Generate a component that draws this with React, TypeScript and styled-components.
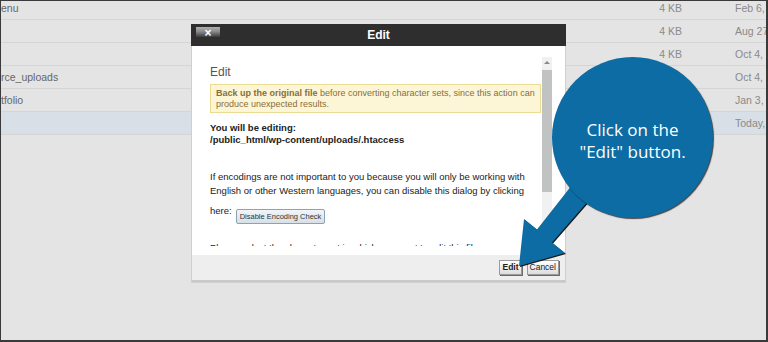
import React from 'react';
import styled, { createGlobalStyle } from 'styled-components';

const GlobalStyle = createGlobalStyle`
  html, body {
    margin: 0;
    padding: 0;
    background: #e4e4e4;
  }
`;

type FileRow = { name: string; size: string; date: string; selected?: boolean };

const files: FileRow[] = [
  { name: 'enu', size: '4 KB', date: 'Feb 6, 2017' },
  { name: '', size: '4 KB', date: 'Aug 27, 2016' },
  { name: '', size: '4 KB', date: 'Oct 4, 2016' },
  { name: 'rce_uploads', size: '', date: 'Oct 4, 2016' },
  { name: 'tfolio', size: '', date: 'Jan 3, 2017' },
  { name: '', size: '', date: 'Today, 10:12 AM', selected: true },
];

export default function App() {
  return (
    <>
      <GlobalStyle />
      <Frame>
        <FileTable>
          {files.map((f, i) => (
            <Row key={i} $selected={f.selected}>
              <NameCell>{f.name}</NameCell>
              <SizeCell>{f.size}</SizeCell>
              <DateCell>{f.date}</DateCell>
            </Row>
          ))}
        </FileTable>

        <Dialog>
          <TitleBar>
            <CloseTab>×</CloseTab>
            <Title>Edit</Title>
            <span />
          </TitleBar>
          <Body>
            <ScrollArea>
              <Content>
                <Heading>Edit</Heading>
                <Notice>
                  <strong>Back up the original file</strong> before converting character sets, since this action can
                  produce unexpected results.
                </Notice>
                <BoldLines>
                  You will be editing:
                  <br />
                  /public_html/wp-content/uploads/.htaccess
                </BoldLines>
                <Paragraph>
                  If encodings are not important to you because you will only be working with English or other
                  Western languages, you can disable this dialog by clicking
                </Paragraph>
                <HereRow>
                  <span>here:</span>
                  <SmallButton>Disable Encoding Check</SmallButton>
                </HereRow>
                <Paragraph $gap={17}>
                  Please select the character set in which you want to edit this file.
                </Paragraph>
              </Content>
              <Scrollbar>
                <ScrollArrow />
                <ScrollThumb />
              </Scrollbar>
            </ScrollArea>
          </Body>
          <Footer>
            <FooterButton $primary>Edit</FooterButton>
            <FooterButton>Cancel</FooterButton>
          </Footer>
        </Dialog>

        <ArrowLayer width="768" height="342" viewBox="1 1 768 342">
          <polygon
            points="605,143 537,229.6 524,219 519,266 565,253 552,242.4 624,160"
            fill="#0c6ca3"
          />
        </ArrowLayer>

        <Callout>
          <CalloutText>
            Click on the
            <br />
            "Edit" button.
          </CalloutText>
        </Callout>
      </Frame>
    </>
  );
}

const Frame = styled.div`
    position: relative;
    width: 768px;
    height: 342px;
    box-sizing: border-box;
    border: 1px solid #3a3a3a;
    border-right-width: 2px;
    border-bottom-width: 2px;
    background: #e4e4e4;
    overflow: hidden;
    font-family: "Liberation Sans", Arial, sans-serif;
  `,
  FileTable = styled.div`
    display: flex;
    flex-direction: column;
    margin-top: -4px;
  `,
  Row = styled.div<{ $selected?: boolean }>`
    display: grid;
    grid-template-columns: 1fr 80px 31px;
    column-gap: 53px;
    align-items: center;
    height: 23px;
    box-sizing: border-box;
    border-bottom: 1px solid #d5d5d5;
    background: ${p => (p.$selected ? '#d8dfe6' : 'transparent')};
    font-size: 10.5px;
    color: #7a7a7a;
    white-space: nowrap;
  `,
  NameCell = styled.div`
    color: #666;
    overflow: hidden;
  `,
  SizeCell = styled.div`
    text-align: right;
    color: #8a8a8a;
  `,
  DateCell = styled.div`
    color: #8a8a8a;
    overflow: hidden;
  `,
  Dialog = styled.div`
    position: absolute;
    left: 190px;
    top: 23px;
    width: 375px;
    height: 259px;
    box-sizing: border-box;
    display: flex;
    flex-direction: column;
    border: 1px solid #cfcfcf;
    border-top: none;
    background: #fff;
  `,
  TitleBar = styled.div`
    flex: none;
    display: grid;
    grid-template-columns: 1fr auto 1fr;
    align-items: start;
    height: 22px;
    background: #2e2e2e;
    margin: 0 -1px;
  `,
  CloseTab = styled.div`
    width: 24px;
    height: 10px;
    margin: 3px 0 0 5px;
    background: linear-gradient(#b0b0b0 0%, #8a8a8a 45%, #3a3a3a 100%);
    color: #fff;
    font-size: 12px;
    font-weight: bold;
    line-height: 12px;
    text-align: center;
  `,
  Title = styled.div`
    color: #fff;
    font-weight: bold;
    font-size: 12px;
    line-height: 22px;
  `,
  Body = styled.div`
    flex: 1;
    min-height: 0;
    padding: 11px 13px 9px 8px;
    display: flex;
    flex-direction: column;
  `,
  ScrollArea = styled.div`
    flex: 1;
    min-height: 0;
    display: flex;
    overflow: hidden;
  `,
  Content = styled.div`
    flex: 1;
    padding: 0 1px 0 10px;
    font-size: 9.5px;
    color: #222;
  `,
  Heading = styled.div`
    margin: 7px 0 4px;
    font-size: 12px;
    line-height: 16px;
    color: #555;
  `,
  Notice = styled.div`
    border: 1px solid #ecdc93;
    background: #fcf6d6;
    color: #8a6d3b;
    padding: 3px 5px 2px;
    line-height: 11px;
    font-size: 9px;

    strong {
      font-weight: bold;
    }
  `,
  BoldLines = styled.div`
    margin-top: 9px;
    font-weight: bold;
    line-height: 12px;
    font-size: 9.5px;
  `,
  Paragraph = styled.div<{ $gap?: number }>`
    margin-top: ${p => p.$gap ?? 24}px;
    line-height: 14px;
    width: 330px;
  `,
  HereRow = styled.div`
    display: flex;
    align-items: flex-start;
    gap: 4px;
    margin-top: 6px;
    line-height: 14px;
  `,
  SmallButton = styled.div`
    margin-top: 5px;
    height: 15px;
    box-sizing: border-box;
    padding: 0 3px;
    border: 1px solid #8ea2b3;
    border-radius: 2px;
    background: linear-gradient(#f1f5f8, #d6e0e8);
    font-size: 7.5px;
    line-height: 13px;
    color: #333;
    white-space: nowrap;
  `,
  Scrollbar = styled.div`
    width: 10px;
    background: #f1f1f1;
    display: flex;
    flex-direction: column;
    align-items: center;
  `,
  ScrollArrow = styled.div`
    margin-top: 4px;
    width: 0;
    height: 0;
    border-left: 3px solid transparent;
    border-right: 3px solid transparent;
    border-bottom: 3px solid #8a8a8a;
  `,
  ScrollThumb = styled.div`
    margin-top: 6px;
    width: 10px;
    height: 122px;
    background: #c1c3c3;
  `,
  Footer = styled.div`
    flex: none;
    height: 27px;
    box-sizing: border-box;
    display: flex;
    align-items: center;
    justify-content: flex-end;
    gap: 5px;
    padding: 0 6px;
    background: #eeeeee;
    border-bottom: 2px solid #c9c9c9;
  `,
  FooterButton = styled.div<{ $primary?: boolean }>`
    height: 15px;
    box-sizing: border-box;
    padding: 0 2px;
    border: 1px solid #9a9a9a;
    box-shadow: 1px 1px 0 #6a6a6a;
    background: linear-gradient(#ffffff, #dcdcdc);
    font-size: 8.5px;
    line-height: 13px;
    font-weight: ${p => (p.$primary ? 'bold' : 'normal')};
    color: #222;
  `,
  ArrowLayer = styled.svg`
    position: absolute;
    left: 0;
    top: 0;
    pointer-events: none;
    filter: drop-shadow(1.5px 1.5px 0.4px rgba(0, 0, 0, 0.9));
  `,
  Callout = styled.div`
    position: absolute;
    left: 551px;
    top: 56px;
    width: 161px;
    height: 161px;
    border-radius: 50%;
    background: #0c6ca3;
    box-shadow: 1px 1px 1px rgba(0, 0, 0, 0.7);
    display: flex;
    align-items: center;
    justify-content: center;
  `,
  CalloutText = styled.div`
    padding-top: 7px;
    color: #fff;
    font-family: "Open Sans", "Noto Sans", sans-serif;
    font-size: 17px;
    line-height: 22px;
    text-align: center;
  `;
